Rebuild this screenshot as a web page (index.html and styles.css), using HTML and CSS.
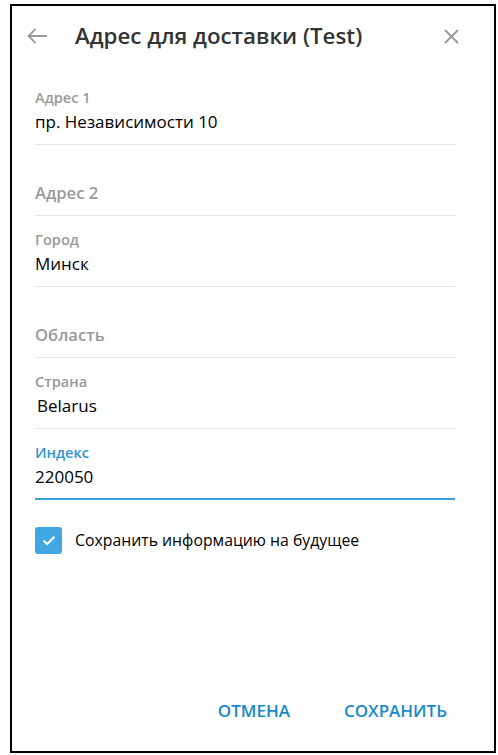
FILE: index.html
```html
<!DOCTYPE html>
<html lang="ru">
<head>
<meta charset="utf-8">
<title>Адрес для доставки</title>
<link rel="stylesheet" href="styles.css">
</head>
<body>
<div class="dialog">
  <header class="header">
    <button class="icon-btn back" aria-label="Назад">
      <svg width="20" height="16" viewBox="0 0 20 16"><path d="M1.5 8H20M8.5 1L1.5 8L8.5 15" fill="none" stroke="#999" stroke-width="1.8"/></svg>
    </button>
    <h1 class="title">Адрес для доставки (Test)</h1>
    <button class="icon-btn close" aria-label="Закрыть">
      <svg width="15" height="15" viewBox="0 0 15 15"><path d="M1 1L14 14M14 1L1 14" fill="none" stroke="#999" stroke-width="1.8"/></svg>
    </button>
  </header>
  <form class="form">
    <div class="field">
      <div class="label">Адрес 1</div>
      <div class="value">пр. Независимости 10</div>
    </div>
    <div class="field">
      <div class="label"></div>
      <div class="value placeholder">Адрес 2</div>
    </div>
    <div class="field">
      <div class="label">Город</div>
      <div class="value">Минск</div>
    </div>
    <div class="field">
      <div class="label"></div>
      <div class="value placeholder">Область</div>
    </div>
    <div class="field">
      <div class="label">Страна</div>
      <div class="value indent">Belarus</div>
    </div>
    <div class="field active">
      <div class="label">Индекс</div>
      <div class="value">220050</div>
    </div>
    <label class="check">
      <span class="box">
        <svg width="14" height="11" viewBox="0 0 14 11"><path d="M1.5 5.5L5.2 9L12.5 1.8" fill="none" stroke="#fff" stroke-width="2"/></svg>
      </span>
      <span class="check-text">Сохранить информацию на будущее</span>
    </label>
  </form>
  <footer class="footer">
    <button class="btn">Отмена</button>
    <button class="btn">Сохранить</button>
  </footer>
</div>
</body>
</html>
```
FILE: styles.css
```css
* { box-sizing: border-box; }
html, body { margin: 0; padding: 0; background: #fff; }
body {
  font-family: "Open Sans", "Noto Sans", sans-serif;
  color: #000;
}
.dialog {
  margin: 4px 2px 2px 10px;
  width: 486px;
  height: 749px;
  border: 2px solid #000;
  display: flex;
  flex-direction: column;
  background: #fff;
}
.header {
  height: 60px;
  display: flex;
  align-items: center;
  padding: 0 0 0 15px;
}
.icon-btn {
  background: none;
  border: 0;
  padding: 0;
  display: flex;
  align-items: center;
  justify-content: center;
  cursor: pointer;
}
.back { width: 20px; height: 16px; }
.title {
  margin: 0 0 0 28px;
  font-size: 22.3px;
  font-weight: 600;
  color: #333;
  line-height: 28px;
  flex: 1;
}
.close { width: 15px; height: 15px; margin-right: 35px; }
.form {
  padding: 8px 39px 0 23px;
  display: flex;
  flex-direction: column;
}
.field {
  padding: 13px 0 11px;
  border-bottom: 1px solid #e4e4e4;
}
.label {
  font-size: 14.6px;
  font-weight: 600;
  line-height: 20px;
  height: 20px;
  color: #999;
  margin-bottom: 4px;
}
.value {
  font-size: 17px;
  line-height: 22px;
  color: #000;
}
.value.placeholder { color: #999; font-size: 16.6px; font-weight: 600; }
.value.indent { padding-left: 2px; }
.field.active { border-bottom: 2px solid #3a9fdd; padding-bottom: 10px; }
.field.active .label { color: #2d95d6; }
.check {
  margin-top: 27px;
  display: flex;
  align-items: center;
}
.box {
  width: 27px;
  height: 27px;
  border-radius: 3px;
  background: #40a7e3;
  display: flex;
  align-items: center;
  justify-content: center;
}
.check-text {
  margin-left: 13px;
  font-size: 15.8px;
  color: #000;
  margin-top: -2px;
}
.footer {
  margin-top: auto;
  display: flex;
  justify-content: flex-end;
  gap: 22px;
  padding: 0 31px 23px 0;
}
.btn {
  background: none;
  border: 0;
  height: 36px;
  padding: 0 16px;
  font-family: "Open Sans", "Noto Sans", sans-serif;
  font-size: 17px;
  font-weight: 600;
  text-transform: uppercase;
  color: #168acd;
  cursor: pointer;
}
```
